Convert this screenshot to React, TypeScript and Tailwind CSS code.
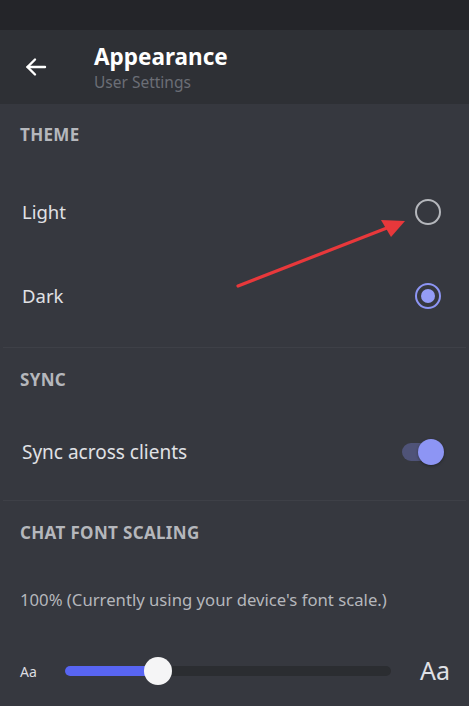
import * as React from "react";

function Radio({ checked }: { checked: boolean }) {
    return checked ? (
        <div className="w-[26px] h-[26px] rounded-full border-2 border-[#8d95f4] flex items-center justify-center">
            <div className="w-[14px] h-[14px] rounded-full bg-[#949cf7]" />
        </div>
    ) : (
        <div className="w-[26px] h-[26px] rounded-full border-2 border-[#b5b7bc]" />
    );
}

function SectionLabel({ children }: { children: React.ReactNode }) {
    return (
        <div className="h-[64px] flex items-center px-5">
            <span className="text-[17px] font-bold uppercase tracking-[0.02em] text-[#b5b7bc]">{children}</span>
        </div>
    );
}

export default function App() {
    return (
        <div className="relative w-[469px] h-[706px] overflow-hidden bg-[#36383f] font-['Noto_Sans',sans-serif]">
            <div className="h-[30px] bg-[#242529]" />

            <header className="h-[74px] bg-[#2e3035] flex items-center">
                <div className="w-[94px] flex items-center pl-[24px]">
                    <svg width="24" height="24" viewBox="0 0 24 24" fill="none" stroke="#ffffff" strokeWidth="2.4" strokeLinecap="round" strokeLinejoin="round">
                        <path d="M21 12H3.5" />
                        <path d="M11 4.5L3.5 12l7.5 7.5" />
                    </svg>
                </div>
                <div className="flex flex-col -mt-[1px]">
                    <span className="text-[22.5px] leading-[31px] font-bold text-white">Appearance</span>
                    <span className="text-[15.5px] leading-[21px] text-[#6b6e76]">User Settings</span>
                </div>
            </header>

            <section className="pb-[9px]">
                <div className="h-[62px] flex items-center px-5">
                    <span className="text-[17px] font-bold uppercase tracking-[0.02em] text-[#b5b7bc]">Theme</span>
                </div>
                <div className="mt-[4px] h-[84px] flex items-center justify-between pl-[22px] pr-[28px]">
                    <span className="text-[18.5px] text-[#e0e1e5]">Light</span>
                    <Radio checked={false} />
                </div>
                <div className="h-[84px] flex items-center justify-between pl-[22px] pr-[28px]">
                    <span className="text-[18.5px] text-[#e0e1e5]">Dark</span>
                    <Radio checked={true} />
                </div>
            </section>

            <div className="h-px bg-[#3e4047] mx-[3px]" />

            <section className="pb-[8px]">
                <SectionLabel>Sync</SectionLabel>
                <div className="h-[80px] flex items-center justify-between pl-[22px] pr-[25px]">
                    <span className="text-[19px] text-[#e0e1e5]">Sync across clients</span>
                    <div className="relative w-[42px] h-[26px] flex items-center">
                        <div className="w-[38px] h-[18px] rounded-full bg-[#4f5378]" />
                        <div className="absolute right-0 top-0 w-[26px] h-[26px] rounded-full bg-[#8d95f4] shadow-[0_1px_3px_rgba(0,0,0,0.35)]" />
                    </div>
                </div>
            </section>

            <div className="h-px bg-[#3e4047] mx-[3px]" />

            <section>
                <SectionLabel>Chat Font Scaling</SectionLabel>
                <div className="h-[70px] flex items-center px-5">
                    <span className="text-[16.7px] text-[#b5b7bc]">100% (Currently using your device's font scale.)</span>
                </div>
                <div className="h-[72px] flex items-center pl-5 pr-[19px]">
                    <span className="w-[45px] text-[14px] text-[#dcdde0]">Aa</span>
                    <div className="relative w-[326px] h-[10px] rounded-full bg-[#2b2d31]">
                        <div className="w-[93px] h-[10px] rounded-full bg-[#5865f2]" />
                        <div className="absolute left-[79px] top-[-9px] w-[28px] h-[28px] rounded-full bg-[#f5f5f6]" />
                    </div>
                    <span className="ml-auto text-[25px] text-[#e0e1e5]">Aa</span>
                </div>
            </section>

            <svg className="absolute left-0 top-0 pointer-events-none" width="469" height="706">
                <line x1="238" y1="286" x2="392" y2="226" stroke="#e8383b" strokeWidth="3.2" strokeLinecap="round" />
                <polygon points="405,221 381,220 391,237" fill="#e8383b" />
            </svg>
        </div>
    );
}
